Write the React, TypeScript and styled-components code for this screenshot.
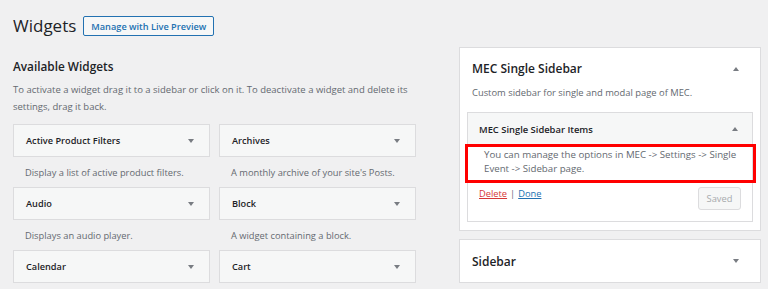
import React from 'react'
import styled, { createGlobalStyle } from 'styled-components'

const GlobalStyle = createGlobalStyle`
  html, body {
    margin: 0;
    padding: 0;
    background: #f0f0f1;
  }
  body {
    font-family: "Open Sans", "Liberation Sans", sans-serif;
    color: #3c434a;
  }
  * {
    box-sizing: border-box;
  }
`

type Widget = { title: string; desc?: string }

const widgets: Widget[] = [
  { title: 'Active Product Filters', desc: 'Display a list of active product filters.' },
  { title: 'Archives', desc: "A monthly archive of your site's Posts." },
  { title: 'Audio', desc: 'Displays an audio player.' },
  { title: 'Block', desc: 'A widget containing a block.' },
  { title: 'Calendar' },
  { title: 'Cart' },
]

function Arrow({ up }: { up?: boolean }) {
  return (
    <ArrowIcon width="6" height="4" viewBox="0 0 6 4">
      {up ? (
        <polygon points="0,4 6,4 3,0" fill="#787c82" />
      ) : (
        <polygon points="0,0 6,0 3,4" fill="#787c82" />
      )}
    </ArrowIcon>
  )
}

export default function App() {
  return (
    <>
      <GlobalStyle />
      <Page>
        <HeaderRow>
          <Title>Widgets</Title>
          <LiveButton>Manage with Live Preview</LiveButton>
        </HeaderRow>
        <Columns>
          <LeftCol>
            <SectionTitle>Available Widgets</SectionTitle>
            <Intro>
              To activate a widget drag it to a sidebar or click on it. To
              deactivate a widget and delete its settings, drag it back.
            </Intro>
            <WidgetGrid>
              {widgets.map((w) => (
                <WidgetItem key={w.title}>
                  <WidgetCard>
                    <span>{w.title}</span>
                    <Arrow />
                  </WidgetCard>
                  {w.desc && <WidgetDesc>{w.desc}</WidgetDesc>}
                </WidgetItem>
              ))}
            </WidgetGrid>
          </LeftCol>
          <RightCol>
            <SidebarBox>
              <SidebarHead>
                <span>MEC Single Sidebar</span>
                <Arrow up />
              </SidebarHead>
              <SidebarDesc>
                Custom sidebar for single and modal page of MEC.
              </SidebarDesc>
              <InnerWidget>
                <InnerHead>
                  <span>MEC Single Sidebar Items</span>
                  <Arrow up />
                </InnerHead>
                <Note>
                  You can manage the options in MEC -&gt; Settings -&gt; Single
                  Event -&gt; Sidebar page.
                </Note>
                <Actions>
                  <Links>
                    <ActionLink danger>Delete</ActionLink>
                    <Sep>|</Sep>
                    <ActionLink>Done</ActionLink>
                  </Links>
                  <SavedButton disabled>Saved</SavedButton>
                </Actions>
              </InnerWidget>
            </SidebarBox>
            <ClosedSidebar>
              <span>Sidebar</span>
              <Arrow />
            </ClosedSidebar>
          </RightCol>
        </Columns>
      </Page>
    </>
  )
}

const Page = styled.div`
  width: 768px;
  height: 289px;
  overflow: hidden;
  padding: 16px 7px 0 13px;
`

const HeaderRow = styled.div`
  display: flex;
  align-items: center;
  gap: 7px;
  height: 20px;
`

const Title = styled.h1`
  margin: 0;
  font-size: 17px;
  font-weight: 400;
  line-height: 20px;
  color: #1d2327;
`

const LiveButton = styled.button`
  height: 20px;
  padding: 0 7px;
  border: 1px solid #2271b1;
  border-radius: 2px;
  background: #f6f7f7;
  color: #2271b1;
  font-family: inherit;
  font-size: 9.2px;
  font-weight: 600;
`

const Columns = styled.div`
  display: flex;
  gap: 43px;
  margin-top: 11px;
`

const LeftCol = styled.div`
  width: 403px;
  flex-shrink: 0;
`

const RightCol = styled.div`
  width: 302px;
  flex-shrink: 0;
`

const SectionTitle = styled.h2`
  margin: 9px 0 0;
  font-size: 11.8px;
  font-weight: 600;
  line-height: 20px;
  color: #1d2327;
`

const Intro = styled.p`
  margin: 5px 0 0;
  font-size: 9.5px;
  line-height: 17px;
  color: #646970;
`

const WidgetGrid = styled.div`
  display: grid;
  grid-template-columns: 197px 197px;
  column-gap: 9px;
  margin-top: 9px;
`

const WidgetItem = styled.div`
  display: flex;
  flex-direction: column;
`

const WidgetCard = styled.div`
  display: flex;
  align-items: center;
  justify-content: space-between;
  height: 33px;
  padding: 0 15px 0 12px;
  border: 1px solid #dcdcde;
  background: #f6f7f7;
  font-size: 9.2px;
  font-weight: 600;
  color: #1d2327;
`

const WidgetDesc = styled.div`
  display: flex;
  align-items: center;
  height: 30px;
  padding-left: 12px;
  font-size: 9.3px;
  color: #646970;
`

const ArrowIcon = styled.svg`
  display: block;
  flex-shrink: 0;
`

const SidebarBox = styled.div`
  background: #fff;
  border: 1px solid #dcdcde;
`

const SidebarHead = styled.div`
  display: flex;
  align-items: center;
  justify-content: space-between;
  padding: 11px 21px 0 12px;
  font-size: 12px;
  font-weight: 600;
  line-height: 20px;
  color: #1d2327;
`

const SidebarDesc = styled.p`
  margin: 5px 0 0;
  padding: 0 12px;
  font-size: 9.4px;
  line-height: 17px;
  color: #646970;
`

const InnerWidget = styled.div`
  margin: 11px 7px 8px;
  border: 1px solid #dcdcde;
`

const InnerHead = styled.div`
  display: flex;
  align-items: center;
  justify-content: space-between;
  height: 32px;
  padding: 0 14px 0 11px;
  background: #f6f7f7;
  font-size: 9.4px;
  font-weight: 600;
  color: #1d2327;
`

const Note = styled.p`
  position: relative;
  margin: 0;
  padding: 3px 12px 6px 16px;
  font-size: 9.7px;
  line-height: 14px;
  color: #646970;

  &::after {
    content: '';
    position: absolute;
    top: -1px;
    bottom: -1px;
    left: -3px;
    right: -4px;
    border: 3px solid #ff0000;
  }
`

const Actions = styled.div`
  display: flex;
  align-items: flex-start;
  justify-content: space-between;
  padding: 5px 11px 11px 11px;
`

const Links = styled.div`
  display: flex;
  gap: 3px;
  font-size: 9.3px;
  line-height: 14px;
`

const ActionLink = styled.a<{ danger?: boolean }>`
  color: ${({ danger }) => (danger ? '#d63638' : '#2271b1')};
  text-decoration: underline;
  cursor: pointer;
`

const Sep = styled.span`
  color: #646970;
`

const SavedButton = styled.button`
  width: 43px;
  height: 23px;
  padding: 0;
  border: 1px solid #dcdcde;
  border-radius: 3px;
  background: #f6f7f7;
  color: #a7aaad;
  font-family: inherit;
  font-size: 9.3px;
`

const ClosedSidebar = styled.div`
  display: flex;
  align-items: center;
  justify-content: space-between;
  height: 44px;
  margin-top: 8px;
  padding: 0 21px 0 12px;
  background: #fff;
  border: 1px solid #dcdcde;
  font-size: 12px;
  font-weight: 600;
  color: #1d2327;
`
